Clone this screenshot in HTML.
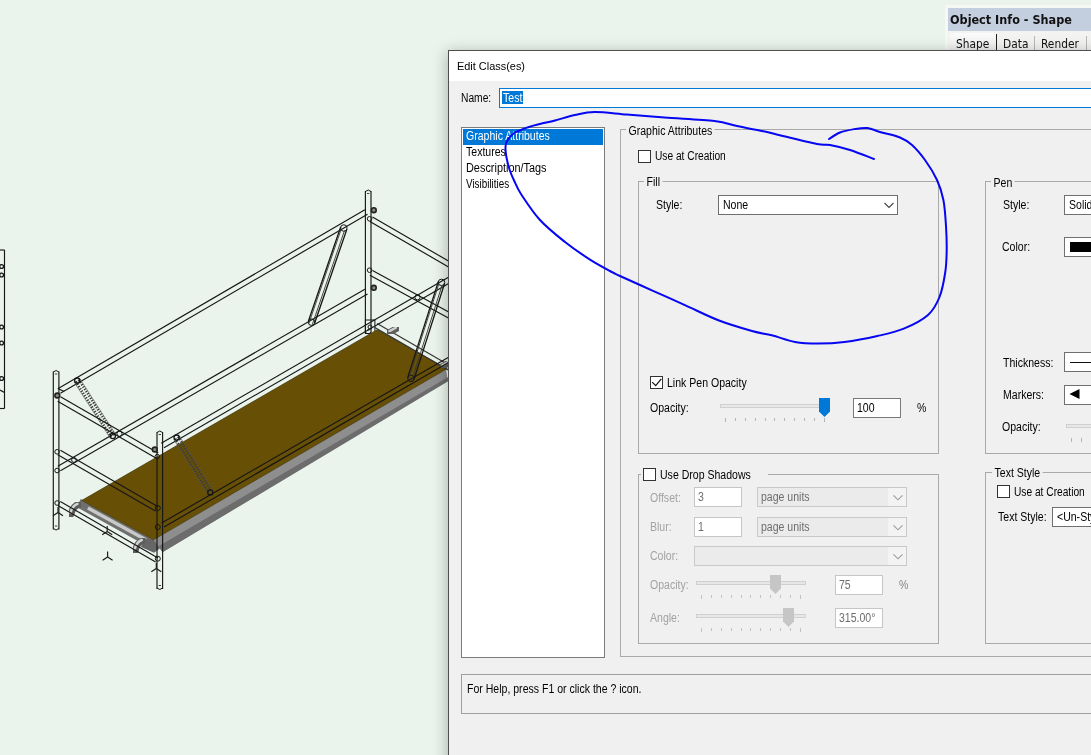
<!DOCTYPE html>
<html lang="en"><head><meta charset="utf-8"><title>Edit Class(es)</title>
<style>
html,body{margin:0;padding:0}
body{width:1091px;height:755px;overflow:hidden;position:relative;background:#eaf4ec;font-family:"Liberation Sans",sans-serif;font-size:12.5px;color:#000}
.abs,.t,.grp,.inp,.cmb,.chk,.lst,.trk{position:absolute;box-sizing:border-box}
.t{white-space:nowrap;line-height:16px;height:16px;transform-origin:0 50%;transform:scaleX(.843)}
.t.g{color:#a2a2a2}
.t.lbl{background:#f0f0f0;padding:0 3px;margin-left:-3px}
.grp{border:1px solid #a9a9a9}
.inp{border:1px solid #7a7a7a;background:#fff}
.inp.d{border-color:#c6c6c6}
.cmb{border:1px solid #6f6f6f;background:#fff}
.cmb.d{border-color:#c9c9c9;background:#ebebeb}
.cmb.d i{position:absolute;right:0;top:0;bottom:0;width:18px;background:#f3f3f3}
.chk{width:13px;height:13px;border:1px solid #333;background:#fff}
.lst{border:1px solid #7b7b7b;background:#fff}
.trk{height:4px;border:1px solid #d0d0d0;background:#e7e7e7}
svg{position:absolute;left:0;top:0;overflow:visible}
</style></head><body>
<svg width="1091" height="755" viewBox="0 0 1091 755" shape-rendering="geometricPrecision">
<defs><filter id="b0" x="-5%" y="-5%" width="110%" height="110%"><feGaussianBlur stdDeviation="0.9"/></filter><filter id="b1" x="-20%" y="-20%" width="140%" height="140%"><feGaussianBlur stdDeviation="0.6"/></filter></defs>
<line x1="4.5" y1="250.0" x2="4.5" y2="408.5" stroke="#161616" stroke-width="1.15" />
<line x1="0.0" y1="250.0" x2="4.5" y2="250.0" stroke="#161616" stroke-width="1.15" />
<line x1="0.0" y1="408.5" x2="4.5" y2="408.5" stroke="#161616" stroke-width="1.15" />
<line x1="0.0" y1="390.0" x2="4.5" y2="392.5" stroke="#161616" stroke-width="1.15" />
<circle cx="1.6" cy="266.5" r="1.9" fill="none" stroke="#161616" stroke-width="1.3"/>
<circle cx="1.6" cy="275.0" r="1.9" fill="none" stroke="#161616" stroke-width="1.3"/>
<circle cx="1.6" cy="327.0" r="1.9" fill="none" stroke="#161616" stroke-width="1.3"/>
<circle cx="1.6" cy="343.0" r="1.9" fill="none" stroke="#161616" stroke-width="1.3"/>
<circle cx="1.6" cy="378.5" r="1.9" fill="none" stroke="#161616" stroke-width="1.3"/>
<line x1="60.4" y1="393.2" x2="367.5" y2="214.2" stroke="#161616" stroke-width="1.15" />
<line x1="57.8" y1="388.8" x2="364.9" y2="209.7" stroke="#161616" stroke-width="1.15" />
<line x1="60.4" y1="470.8" x2="367.5" y2="294.0" stroke="#161616" stroke-width="1.15" />
<line x1="57.8" y1="466.2" x2="364.9" y2="289.3" stroke="#161616" stroke-width="1.15" />
<line x1="365.4" y1="191.0" x2="365.4" y2="333.5" stroke="#161616" stroke-width="1.15" />
<line x1="371.0" y1="191.0" x2="371.0" y2="333.5" stroke="#161616" stroke-width="1.15" />
<path d="M365.4,191.5 Q368.2,188.5 371.0,191.5" fill="none" stroke="#161616"/>
<path d="M365.4,332.5 Q368.2,335.5 371.0,332.5" fill="none" stroke="#161616"/>
<line x1="367.0" y1="193.5" x2="369.4" y2="193.5" stroke="#161616" stroke-width="0.8" />
<line x1="367.0" y1="330.0" x2="369.4" y2="330.0" stroke="#161616" stroke-width="0.8" />
<rect x="365.4" y="320" width="9.5" height="13.5" fill="none" stroke="#161616"/>
<circle cx="370.0" cy="327.0" r="2" fill="none" stroke="#161616" stroke-width="1"/>
<circle cx="373.8" cy="210.2" r="2.4" fill="#8a8a8a" stroke="#222" stroke-width="1.6"/>
<circle cx="373.8" cy="287.8" r="2.4" fill="#8a8a8a" stroke="#222" stroke-width="1.6"/>
<circle cx="369.6" cy="218.8" r="2.3" fill="none" stroke="#161616" stroke-width="1"/>
<circle cx="369.6" cy="270.2" r="2.3" fill="none" stroke="#161616" stroke-width="1"/>
<line x1="369.9" y1="221.5" x2="450.7" y2="268.2" stroke="#161616" stroke-width="1.15" />
<line x1="372.5" y1="217.1" x2="453.3" y2="263.8" stroke="#161616" stroke-width="1.15" />
<line x1="369.9" y1="275.2" x2="450.7" y2="319.2" stroke="#161616" stroke-width="1.15" />
<line x1="372.5" y1="270.4" x2="453.3" y2="314.5" stroke="#161616" stroke-width="1.15" />
<line x1="340.7" y1="226.9" x2="308.4" y2="321.1" stroke="#161616" stroke-width="1.35" />
<line x1="346.9" y1="229.1" x2="314.6" y2="323.3" stroke="#161616" stroke-width="1.35" />
<circle cx="343.8" cy="228.0" r="3.25" fill="none" stroke="#161616" stroke-width="1"/>
<circle cx="311.5" cy="322.2" r="3.25" fill="none" stroke="#161616" stroke-width="1"/>
<line x1="341.1" y1="229.4" x2="308.8" y2="323.6" stroke="#333" stroke-width="0.9" />
<line x1="344.5" y1="230.6" x2="312.2" y2="324.8" stroke="#333" stroke-width="0.9" />
<line x1="78.8" y1="379.6" x2="114.4" y2="435.0" stroke="#3c3c3c" stroke-width="2.7" stroke-dasharray="1.3 1.4"/>
<line x1="75.6" y1="381.6" x2="111.2" y2="437.0" stroke="#3c3c3c" stroke-width="2.7" stroke-dasharray="1.3 1.4"/>
<line x1="80.0" y1="378.8" x2="115.6" y2="434.2" stroke="#555" stroke-width="0.6" />
<line x1="74.4" y1="382.4" x2="110.0" y2="437.8" stroke="#555" stroke-width="0.6" />
<circle cx="77.2" cy="380.6" r="2.6" fill="none" stroke="#161616" stroke-width="1.3"/>
<circle cx="112.8" cy="436.0" r="2.6" fill="none" stroke="#161616" stroke-width="1.3"/>
<polygon points="80.8,499.0 153.6,539.0 150.4,548.1 76.5,506.9" fill="#6f6f6f" stroke="none" stroke-width="1" filter="url(#b1)"/>
<polygon points="88.7,506.4 148.0,539.1 146.4,542.0 87.1,509.4" fill="#c9c9c9" stroke="none" stroke-width="1" filter="url(#b1)"/>
<polygon points="143.5,538.5 152.7,538.4 162.3,546.7 154.0,552.7 141.0,547.0" fill="#666" stroke="none" stroke-width="1" filter="url(#b1)"/>
<polygon points="153.5,539.2 445.9,368.7 447.9,381.2 162.5,552.2" fill="#8e8e8e" stroke="none" stroke-width="1" />
<polygon points="158.5,546.2 447.9,377.2 447.9,381.2 162.5,552.2" fill="#6c6c6c" stroke="none" stroke-width="1" />
<polygon points="82.7,500.6 377.3,330.2 445.9,368.7 153.5,539.2" fill="#675005" stroke="#544a22" stroke-width="1.8" filter="url(#b1)"/>
<polygon points="82.7,500.6 377.3,330.2 445.9,368.7 153.5,539.2" fill="#675005" stroke="none" stroke-width="1" />
<line x1="374.9" y1="327.4" x2="450.9" y2="371.4" stroke="#333" stroke-width="1.15" />
<line x1="377.1" y1="323.6" x2="453.1" y2="367.5" stroke="#333" stroke-width="1.15" />
<path d="M389,332.7 l8,-4.4" fill="none" stroke="#5e5e5e" stroke-width="6.6" stroke-linecap="round" filter="url(#b1)"/>
<path d="M389.4,331.1 l6.4,-3.4" fill="none" stroke="#cfcfcf" stroke-width="2.4" stroke-linecap="round" filter="url(#b1)"/>
<path d="M442,366.7 l8,-4.4" fill="none" stroke="#5e5e5e" stroke-width="6.6" stroke-linecap="round" filter="url(#b1)"/>
<path d="M442.4,365.1 l6.4,-3.4" fill="none" stroke="#cfcfcf" stroke-width="2.4" stroke-linecap="round" filter="url(#b1)"/>
<path d="M78.5,504.5 q-5.5,1.5 -7.6,10" fill="none" stroke="#5c5c5c" stroke-width="6.6" stroke-linecap="round" filter="url(#b1)"/>
<path d="M77.5,503.9 q-5,1.8 -7,8.6" fill="none" stroke="#d4d4d4" stroke-width="2.4" stroke-linecap="round" filter="url(#b1)"/>
<path d="M142.8,540.6 q-5.5,1.5 -7.6,10" fill="none" stroke="#5c5c5c" stroke-width="6.6" stroke-linecap="round" filter="url(#b1)"/>
<path d="M141.8,540.0 q-5,1.8 -7,8.6" fill="none" stroke="#d4d4d4" stroke-width="2.4" stroke-linecap="round" filter="url(#b1)"/>
<line x1="57.9" y1="505.5" x2="155.6" y2="562.0" stroke="#161616" stroke-width="1.15" />
<line x1="60.3" y1="501.5" x2="158.0" y2="558.0" stroke="#161616" stroke-width="1.15" />
<line x1="57.7" y1="401.3" x2="155.4" y2="457.8" stroke="#161616" stroke-width="1.15" />
<line x1="60.5" y1="396.7" x2="158.2" y2="453.1" stroke="#161616" stroke-width="1.15" />
<line x1="57.8" y1="454.7" x2="155.5" y2="511.1" stroke="#161616" stroke-width="1.15" />
<line x1="60.4" y1="450.3" x2="158.1" y2="506.8" stroke="#161616" stroke-width="1.15" />
<line x1="164.0" y1="447.8" x2="453.4" y2="280.7" stroke="#161616" stroke-width="1.15" />
<line x1="161.2" y1="443.2" x2="450.6" y2="276.0" stroke="#161616" stroke-width="1.15" />
<line x1="164.0" y1="527.0" x2="453.2" y2="359.8" stroke="#161616" stroke-width="1.15" />
<line x1="161.6" y1="523.0" x2="450.8" y2="355.9" stroke="#161616" stroke-width="1.15" />
<line x1="178.2" y1="436.6" x2="211.9" y2="491.4" stroke="#3c3c3c" stroke-width="2.7" stroke-dasharray="1.3 1.4"/>
<line x1="175.0" y1="438.6" x2="208.7" y2="493.4" stroke="#3c3c3c" stroke-width="2.7" stroke-dasharray="1.3 1.4"/>
<line x1="179.4" y1="435.9" x2="213.1" y2="490.7" stroke="#555" stroke-width="0.6" />
<line x1="173.8" y1="439.3" x2="207.5" y2="494.1" stroke="#555" stroke-width="0.6" />
<circle cx="176.6" cy="437.6" r="2.6" fill="none" stroke="#161616" stroke-width="1.3"/>
<circle cx="210.3" cy="492.4" r="2.6" fill="none" stroke="#161616" stroke-width="1.3"/>
<line x1="438.4" y1="281.4" x2="407.8" y2="377.4" stroke="#161616" stroke-width="1.35" />
<line x1="444.6" y1="283.4" x2="414.0" y2="379.4" stroke="#161616" stroke-width="1.35" />
<circle cx="441.5" cy="282.4" r="3.25" fill="none" stroke="#161616" stroke-width="1"/>
<circle cx="410.9" cy="378.4" r="3.25" fill="none" stroke="#161616" stroke-width="1"/>
<line x1="438.8" y1="283.9" x2="408.2" y2="379.9" stroke="#333" stroke-width="0.9" />
<line x1="442.2" y1="284.9" x2="411.6" y2="380.9" stroke="#333" stroke-width="0.9" />
<circle cx="119.5" cy="433.8" r="2.6" fill="none" stroke="#161616" stroke-width="1"/>
<circle cx="417.5" cy="297.3" r="2.6" fill="none" stroke="#161616" stroke-width="1"/>
<circle cx="74.0" cy="460.0" r="2.4" fill="none" stroke="#161616" stroke-width="1"/>
<line x1="53.3" y1="371.5" x2="53.3" y2="529.5" stroke="#161616" stroke-width="1.15" />
<line x1="58.9" y1="371.5" x2="58.9" y2="529.5" stroke="#161616" stroke-width="1.15" />
<path d="M53.3,372.0 Q56.1,369.0 58.9,372.0" fill="none" stroke="#161616"/>
<path d="M53.3,528.5 Q56.1,531.5 58.9,528.5" fill="none" stroke="#161616"/>
<line x1="54.9" y1="374.0" x2="57.3" y2="374.0" stroke="#161616" stroke-width="0.8" />
<line x1="54.9" y1="526.0" x2="57.3" y2="526.0" stroke="#161616" stroke-width="0.8" />
<line x1="157.0" y1="432.0" x2="157.0" y2="589.0" stroke="#161616" stroke-width="1.15" />
<line x1="162.6" y1="432.0" x2="162.6" y2="589.0" stroke="#161616" stroke-width="1.15" />
<path d="M157.0,432.5 Q159.8,429.5 162.6,432.5" fill="none" stroke="#161616"/>
<path d="M157.0,588.0 Q159.8,591.0 162.6,588.0" fill="none" stroke="#161616"/>
<line x1="158.6" y1="434.5" x2="161.0" y2="434.5" stroke="#161616" stroke-width="0.8" />
<line x1="158.6" y1="585.5" x2="161.0" y2="585.5" stroke="#161616" stroke-width="0.8" />
<circle cx="57.3" cy="395.5" r="2.4" fill="#8a8a8a" stroke="#222" stroke-width="1.6"/>
<circle cx="57.1" cy="451.8" r="2.3" fill="none" stroke="#161616" stroke-width="1"/>
<circle cx="57.1" cy="470.5" r="2.3" fill="none" stroke="#161616" stroke-width="1"/>
<circle cx="57.1" cy="503.0" r="2.3" fill="none" stroke="#161616" stroke-width="1"/>
<line x1="58.0" y1="388.5" x2="64.0" y2="391.5" stroke="#161616" stroke-width="1.3" />
<circle cx="154.8" cy="449.5" r="2.4" fill="#8a8a8a" stroke="#222" stroke-width="1.6"/>
<circle cx="157.3" cy="456.5" r="2.2" fill="none" stroke="#161616" stroke-width="1"/>
<circle cx="157.8" cy="508.0" r="2.5" fill="none" stroke="#161616" stroke-width="1"/>
<circle cx="157.8" cy="527.0" r="2.5" fill="none" stroke="#161616" stroke-width="1"/>
<circle cx="157.8" cy="558.7" r="2.5" fill="none" stroke="#161616" stroke-width="1"/>
<line x1="107.6" y1="557.0" x2="107.6" y2="551.5" stroke="#161616" stroke-width="1.15" />
<line x1="107.6" y1="557.0" x2="102.6" y2="560.2" stroke="#161616" stroke-width="1.15" />
<line x1="107.6" y1="557.0" x2="112.6" y2="560.2" stroke="#161616" stroke-width="1.15" />
<line x1="107.2" y1="531.6" x2="107.2" y2="526.1" stroke="#161616" stroke-width="1.15" />
<line x1="107.2" y1="531.6" x2="102.2" y2="534.8" stroke="#161616" stroke-width="1.15" />
<line x1="107.2" y1="531.6" x2="112.2" y2="534.8" stroke="#161616" stroke-width="1.15" />
<line x1="156.3" y1="568.6" x2="156.3" y2="563.1" stroke="#161616" stroke-width="1.15" />
<line x1="156.3" y1="568.6" x2="151.3" y2="571.8" stroke="#161616" stroke-width="1.15" />
<line x1="156.3" y1="568.6" x2="161.3" y2="571.8" stroke="#161616" stroke-width="1.15" />
<line x1="58.0" y1="512.5" x2="58.0" y2="507.0" stroke="#161616" stroke-width="1.15" />
<line x1="58.0" y1="512.5" x2="53.0" y2="515.7" stroke="#161616" stroke-width="1.15" />
<line x1="58.0" y1="512.5" x2="63.0" y2="515.7" stroke="#161616" stroke-width="1.15" />
</svg>
<div class="abs" style="left:945px;top:5px;width:146px;height:55px;background:#f6f8f6;"></div>
<div class="abs" style="left:948px;top:8px;width:143px;height:23px;background:#c3cfde;"></div>
<span class="abs" style="left:950px;top:10px;font:bold 12.4px/19px 'DejaVu Sans','Liberation Sans',sans-serif;font-stretch:condensed;white-space:nowrap;color:#111;transform-origin:0 50%;transform:scaleX(1.01)">Object Info - Shape</span>
<div class="abs" style="left:948px;top:31px;width:143px;height:20px;background:#f3f3f1;"></div>
<div class="abs" style="left:950px;top:33px;width:46px;height:18px;background:linear-gradient(#fbfbfb,#ededed);"></div>
<div class="abs" style="left:996px;top:34px;width:1px;height:17px;background:#222;width:1.2px"></div>
<div class="abs" style="left:1034px;top:36px;width:1px;height:15px;background:#b9b9b9;"></div>
<div class="abs" style="left:1086px;top:36px;width:1px;height:15px;background:#b9b9b9;"></div>
<span class="abs" style="left:956px;top:36px;font:12.2px/17px 'DejaVu Sans','Liberation Sans',sans-serif;font-stretch:condensed;white-space:nowrap;color:#111;transform-origin:0 50%;transform:scaleX(.97)">Shape</span>
<span class="abs" style="left:1002.8px;top:36px;font:12.2px/17px 'DejaVu Sans','Liberation Sans',sans-serif;font-stretch:condensed;white-space:nowrap;color:#111;transform-origin:0 50%;transform:scaleX(.97)">Data</span>
<span class="abs" style="left:1041px;top:36px;font:12.2px/17px 'DejaVu Sans','Liberation Sans',sans-serif;font-stretch:condensed;white-space:nowrap;color:#111;transform-origin:0 50%;transform:scaleX(.97)">Render</span>
<div class="abs" style="left:448px;top:50px;width:660px;height:720px;background:#f0f0f0;border:1px solid #4f4f4f;box-shadow:0 3px 14px 1px rgba(0,0,0,.27)"></div>
<div class="abs" style="left:449px;top:51px;width:642px;height:30px;background:#fff;"></div>
<span class="t" style="left:457px;top:58px;transform:scaleX(0.95);font-size:11.5px;">Edit Class(es)</span>
<span class="t" style="left:461.3px;top:90px;transform:scaleX(0.82);">Name:</span>
<div class="inp" style="left:499px;top:88px;width:601px;height:20px;border-color:#0078d7;"></div>
<div class="abs" style="left:502px;top:91px;width:21px;height:13px;background:#0078d7;"></div>
<span class="t" style="left:503px;top:90px;color:#fff;">Test</span>
<div class="lst" style="left:461px;top:127px;width:144px;height:531px;"></div>
<div class="abs" style="left:463px;top:129px;width:140px;height:16px;background:#0078d7;"></div>
<span class="t" style="left:465.8px;top:127.6px;color:#fff;">Graphic Attributes</span>
<span class="t" style="left:465.8px;top:143.6px;">Textures</span>
<span class="t" style="left:466px;top:159.6px;transform:scaleX(0.872);">Description/Tags</span>
<span class="t" style="left:465.8px;top:175.6px;transform:scaleX(0.79);">Visibilities</span>
<div class="grp" style="left:620px;top:129px;width:480px;height:528px;"></div>
<span class="t lbl" style="left:628.5px;top:122.5px;">Graphic Attributes</span>
<div class="chk" style="left:638px;top:150px;width:13px;height:13px;"></div>
<span class="t" style="left:654.7px;top:148.3px;transform:scaleX(0.815);">Use at Creation</span>
<div class="grp" style="left:638px;top:181px;width:301px;height:273px;"></div>
<span class="t lbl" style="left:647.3px;top:174.4px;">Fill</span>
<span class="t" style="left:655.7px;top:196.7px;">Style:</span>
<div class="cmb" style="left:718px;top:195px;width:180px;height:20px;"></div>
<span class="t" style="left:723px;top:196.8px;">None</span>
<svg width="1091" height="755"><polyline points="884.5,203 889,207.5 893.5,203" fill="none" stroke="#444" stroke-width="1.1"/></svg>
<div class="chk" style="left:650px;top:376px;width:13px;height:13px;"></div>
<svg width="1091" height="755"><polyline points="652.2,382.2 655.7,385.7 661.3,378.8" fill="none" stroke="#111" stroke-width="1.2"/></svg>
<span class="t" style="left:666.5px;top:375px;">Link Pen Opacity</span>
<span class="t" style="left:649.5px;top:400px;">Opacity:</span>
<div class="trk" style="left:720px;top:404px;width:106px;height:4px;"></div>
<svg width="1091" height="755"><line x1="725.5" y1="418" x2="725.5" y2="422" stroke="#b4b4b4"/><line x1="735.5" y1="418" x2="735.5" y2="421" stroke="#b4b4b4"/><line x1="745.5" y1="418" x2="745.5" y2="421" stroke="#b4b4b4"/><line x1="755.5" y1="418" x2="755.5" y2="421" stroke="#b4b4b4"/><line x1="765.5" y1="418" x2="765.5" y2="421" stroke="#b4b4b4"/><line x1="774.5" y1="418" x2="774.5" y2="421" stroke="#b4b4b4"/><line x1="784.5" y1="418" x2="784.5" y2="421" stroke="#b4b4b4"/><line x1="794.5" y1="418" x2="794.5" y2="421" stroke="#b4b4b4"/><line x1="804.5" y1="418" x2="804.5" y2="421" stroke="#b4b4b4"/><line x1="814.5" y1="418" x2="814.5" y2="421" stroke="#b4b4b4"/><line x1="824.5" y1="418" x2="824.5" y2="422" stroke="#b4b4b4"/><path d="M819,398 h11 v13.5 l-5.5,5.5 l-5.5,-5.5 z" fill="#0078d7"/></svg>
<div class="inp" style="left:853px;top:398px;width:48px;height:20px;"></div>
<span class="t" style="left:857px;top:400px;">100</span>
<span class="t" style="left:916.5px;top:400px;">%</span>
<div class="grp" style="left:638px;top:474px;width:301px;height:170px;"></div>
<div class="abs" style="left:641px;top:466px;width:127px;height:16px;background:#f0f0f0;"></div>
<div class="chk" style="left:643px;top:468px;width:13px;height:13px;"></div>
<span class="t" style="left:659.5px;top:467px;">Use Drop Shadows</span>
<span class="t g" style="left:650.3px;top:489.5px;">Offset:</span>
<div class="inp d" style="left:694px;top:487px;width:48px;height:20px;"></div>
<span class="t" style="left:698px;top:489px;color:#6d6d6d;">3</span>
<div class="cmb d" style="left:757px;top:487px;width:150px;height:20px;"><i></i></div>
<span class="t" style="left:761px;top:489px;color:#6d6d6d;">page units</span>
<span class="t g" style="left:650.3px;top:519px;">Blur:</span>
<div class="inp d" style="left:694px;top:517px;width:48px;height:20px;"></div>
<span class="t" style="left:698px;top:519px;color:#6d6d6d;">1</span>
<div class="cmb d" style="left:757px;top:517px;width:150px;height:20px;"><i></i></div>
<span class="t" style="left:761px;top:519px;color:#6d6d6d;">page units</span>
<span class="t g" style="left:650.3px;top:548px;">Color:</span>
<div class="cmb d" style="left:694px;top:546px;width:213px;height:20px;"><i></i></div>
<svg width="1091" height="755"><polyline points="893.5,495.3 898,499.8 902.5,495.3" fill="none" stroke="#9a9a9a" stroke-width="1.1"/><polyline points="893.5,525.3 898,529.8 902.5,525.3" fill="none" stroke="#9a9a9a" stroke-width="1.1"/><polyline points="893.5,554.3 898,558.8 902.5,554.3" fill="none" stroke="#9a9a9a" stroke-width="1.1"/></svg>
<span class="t g" style="left:650.3px;top:577px;">Opacity:</span>
<div class="trk" style="left:696px;top:581px;width:110px;height:4px;"></div>
<svg width="1091" height="755"><line x1="701.5" y1="595" x2="701.5" y2="599" stroke="#c2c2c2"/><line x1="711.5" y1="595" x2="711.5" y2="598" stroke="#c2c2c2"/><line x1="721.5" y1="595" x2="721.5" y2="598" stroke="#c2c2c2"/><line x1="731.5" y1="595" x2="731.5" y2="598" stroke="#c2c2c2"/><line x1="741.5" y1="595" x2="741.5" y2="598" stroke="#c2c2c2"/><line x1="750.5" y1="595" x2="750.5" y2="598" stroke="#c2c2c2"/><line x1="760.5" y1="595" x2="760.5" y2="598" stroke="#c2c2c2"/><line x1="770.5" y1="595" x2="770.5" y2="598" stroke="#c2c2c2"/><line x1="780.5" y1="595" x2="780.5" y2="598" stroke="#c2c2c2"/><line x1="790.5" y1="595" x2="790.5" y2="598" stroke="#c2c2c2"/><line x1="800.5" y1="595" x2="800.5" y2="599" stroke="#c2c2c2"/><path d="M770,575 h11 v13.5 l-5.5,5.5 l-5.5,-5.5 z" fill="#c6c6c6"/></svg>
<div class="inp d" style="left:835px;top:575px;width:48px;height:20px;"></div>
<span class="t" style="left:839px;top:577px;color:#6d6d6d;">75</span>
<span class="t" style="left:899px;top:577px;color:#858585;">%</span>
<span class="t g" style="left:650.3px;top:610px;">Angle:</span>
<div class="trk" style="left:696px;top:614px;width:110px;height:4px;"></div>
<svg width="1091" height="755"><line x1="701.5" y1="628" x2="701.5" y2="632" stroke="#c2c2c2"/><line x1="711.5" y1="628" x2="711.5" y2="631" stroke="#c2c2c2"/><line x1="721.5" y1="628" x2="721.5" y2="631" stroke="#c2c2c2"/><line x1="731.5" y1="628" x2="731.5" y2="631" stroke="#c2c2c2"/><line x1="741.5" y1="628" x2="741.5" y2="631" stroke="#c2c2c2"/><line x1="750.5" y1="628" x2="750.5" y2="631" stroke="#c2c2c2"/><line x1="760.5" y1="628" x2="760.5" y2="631" stroke="#c2c2c2"/><line x1="770.5" y1="628" x2="770.5" y2="631" stroke="#c2c2c2"/><line x1="780.5" y1="628" x2="780.5" y2="631" stroke="#c2c2c2"/><line x1="790.5" y1="628" x2="790.5" y2="631" stroke="#c2c2c2"/><line x1="800.5" y1="628" x2="800.5" y2="632" stroke="#c2c2c2"/><path d="M783,608 h11 v13.5 l-5.5,5.5 l-5.5,-5.5 z" fill="#c6c6c6"/></svg>
<div class="inp d" style="left:835px;top:608px;width:48px;height:20px;"></div>
<span class="t" style="left:839px;top:610px;color:#6d6d6d;">315.00°</span>
<div class="grp" style="left:985px;top:181px;width:115px;height:273px;"></div>
<span class="t lbl" style="left:994px;top:174.7px;">Pen</span>
<span class="t" style="left:1003px;top:196.7px;">Style:</span>
<div class="cmb" style="left:1064px;top:195px;width:36px;height:20px;"></div>
<span class="t" style="left:1069px;top:196.9px;">Solid</span>
<span class="t" style="left:1002.3px;top:238.7px;">Color:</span>
<div class="cmb" style="left:1064px;top:237px;width:36px;height:20px;"></div>
<div class="abs" style="left:1070px;top:242px;width:30px;height:10px;background:#000;"></div>
<span class="t" style="left:1002.8px;top:354.6px;">Thickness:</span>
<div class="cmb" style="left:1064px;top:352px;width:36px;height:20px;"></div>
<div class="abs" style="left:1070px;top:362px;width:30px;height:1px;background:#111;"></div>
<span class="t" style="left:1002.8px;top:386.5px;">Markers:</span>
<div class="cmb" style="left:1064px;top:385px;width:36px;height:20px;"></div>
<svg width="1091" height="755"><polygon points="1069.5,394 1079.5,389 1079.5,399" fill="#000"/></svg>
<span class="t" style="left:1002px;top:419.4px;">Opacity:</span>
<div class="trk" style="left:1066px;top:424px;width:34px;height:4px;"></div>
<svg width="1091" height="755"><line x1="1071.5" y1="438" x2="1071.5" y2="442" stroke="#b4b4b4"/><line x1="1081.5" y1="438" x2="1081.5" y2="442" stroke="#b4b4b4"/></svg>
<div class="grp" style="left:985px;top:472px;width:115px;height:172px;"></div>
<span class="t lbl" style="left:995px;top:464.5px;">Text Style</span>
<div class="chk" style="left:997px;top:485px;width:13px;height:13px;"></div>
<span class="t" style="left:1013.5px;top:484px;transform:scaleX(0.815);">Use at Creation</span>
<span class="t" style="left:997.5px;top:509px;">Text Style:</span>
<div class="cmb" style="left:1052px;top:507px;width:48px;height:20px;"></div>
<span class="t" style="left:1057px;top:509px;">&lt;Un-Styled&gt;</span>
<div class="grp" style="left:461px;top:674px;width:639px;height:40px;border-color:#9f9f9f;"></div>
<span class="t" style="left:467px;top:680.5px;">For Help, press F1 or click the ? icon.</span>
<svg width="1091" height="755"><path d="M829,139 C830.8,137.9 835.7,134.2 840,132.5 C844.3,130.8 850.4,129.8 855,129 C859.6,128.2 863.3,127.5 867.5,128 C871.7,128.5 874.6,130.4 880,132 C885.4,133.6 894.7,135.3 900,137.5 C905.3,139.7 907.8,141.2 912,145 C916.2,148.8 920.8,154.2 925,160 C929.2,165.8 933.9,173.3 937,180 C940.1,186.7 941.9,192.3 943.4,200 C944.9,207.7 945.5,217.8 946,226 C946.5,234.2 946.8,241.8 946.7,249.5 C946.6,257.2 946.5,264.1 945.3,272 C944.1,279.9 942.4,289.8 939.5,297 C936.6,304.2 934.0,309.7 928,315 C922.0,320.3 912.2,325.2 903.8,328.7 C895.4,332.2 887.3,333.8 877.4,336 C867.5,338.2 854.3,340.7 844.4,342 C834.5,343.3 826.2,343.6 818,343.6 C809.8,343.6 802.7,343.4 795,342 C787.3,340.6 779.0,337.1 771.8,335.3 C764.6,333.5 760.8,333.5 752,331 C743.2,328.5 730.0,324.7 719,320.5 C708.0,316.3 697.0,310.6 686,305.6 C675.0,300.7 664.0,295.7 653,290.8 C642.0,285.9 627.2,279.3 620,276 C612.8,272.7 615.0,273.7 610,271 C605.0,268.3 597.5,264.4 590,259.6 C582.5,254.8 573.3,248.6 565,242 C556.7,235.4 547.3,228.0 540,220 C532.7,212.0 525.3,200.5 521,194 C516.7,187.5 516.2,185.0 514.3,181 C512.4,177.0 511.0,174.0 509.7,170 C508.4,166.0 507.1,160.7 506.4,157 C505.7,153.3 505.4,150.4 505.5,147.8 C505.6,145.2 505.4,143.8 506.9,141.3 C508.4,138.8 510.6,135.4 514.3,133 C518.0,130.6 524.7,128.5 529,127 C533.3,125.5 535.7,125.1 540,124 C544.3,122.9 549.2,122.0 555,120.5 C560.8,119.0 568.2,116.4 574.8,115 C581.4,113.6 586.0,112.1 594.7,112 C603.4,111.9 615.4,113.6 627,114.5 C638.6,115.4 649.9,116.4 664.5,117.5 C679.1,118.6 702.4,119.6 714.5,121 C726.6,122.4 729.1,124.3 737,126 C744.9,127.7 755.7,129.7 762,131 C768.3,132.3 765.8,131.8 775,134 C784.2,136.2 807.8,142.2 817,144 C826.2,145.8 824.5,144.0 830,145 C835.5,146.0 842.7,147.7 850,150 C857.3,152.3 870.0,157.5 874,159" fill="none" stroke="#0606f2" stroke-width="2" stroke-linecap="round" stroke-linejoin="round"/></svg>
</body></html>
